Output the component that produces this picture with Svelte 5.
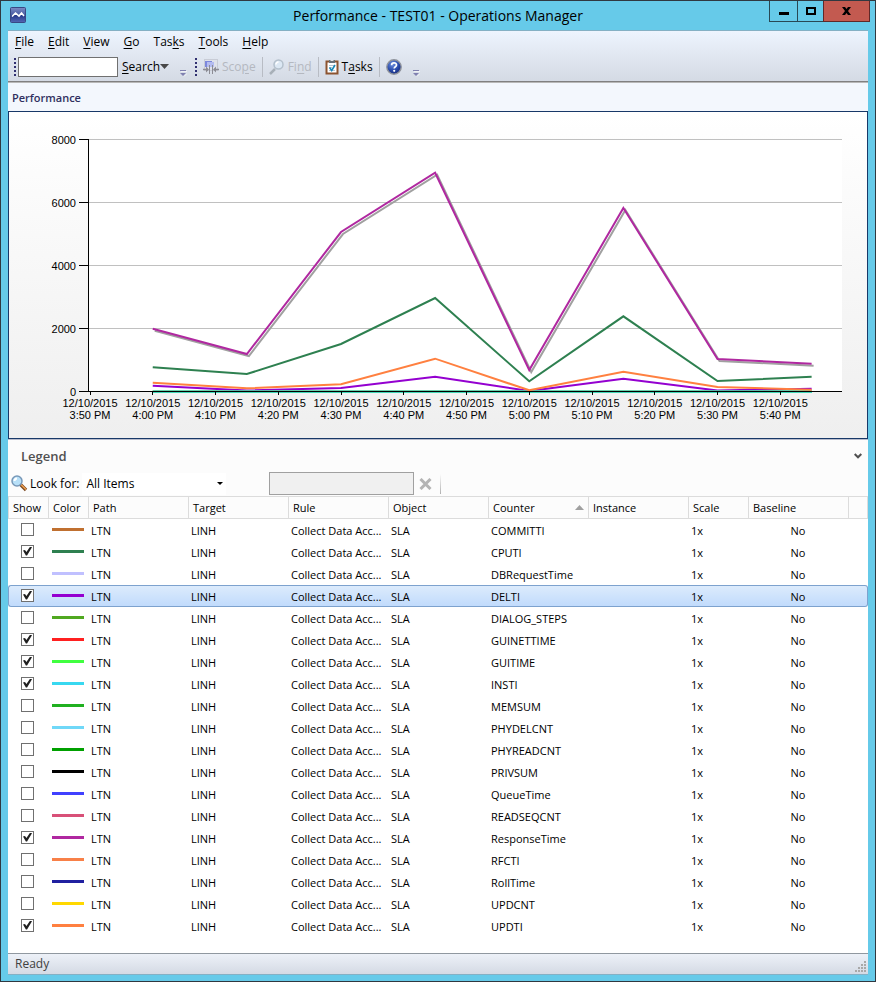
<script>
    // State
    let lookFor = $state("All Items");
    let filter = $state("");
    let search = $state("");
    let selected = $state("DELTI");
    let legendOpen = $state(true);

    const flat = [0, 0, 0, 0, 0, 0, 0, 0];

    let counters = $state([
        { name: "COMMITTI", color: "#c07030", show: false },
        {
            name: "CPUTI",
            color: "#2e8050",
            show: true,
            points: [768, 555, 1508, 2968, 323, 2387, 333, 470],
        },
        { name: "DBRequestTime", color: "#c0c0ff", show: false },
        {
            name: "DELTI",
            color: "#9400d0",
            show: true,
            points: [185, 30, 111, 470, 20, 407, 30, 90],
        },
        { name: "DIALOG_STEPS", color: "#50a820", show: false },
        { name: "GUINETTIME", color: "#ff2020", show: true, points: flat },
        { name: "GUITIME", color: "#40ff40", show: true, points: flat },
        { name: "INSTI", color: "#38d8f0", show: true, points: flat },
        { name: "MEMSUM", color: "#20b020", show: false },
        { name: "PHYDELCNT", color: "#70d8f8", show: false },
        { name: "PHYREADCNT", color: "#00a000", show: false },
        { name: "PRIVSUM", color: "#000000", show: false },
        { name: "QueueTime", color: "#4040ff", show: false },
        { name: "READSEQCNT", color: "#d85078", show: false },
        {
            name: "ResponseTime",
            color: "#b028a0",
            show: true,
            shadow: true,
            points: [1994, 1190, 5063, 6945, 682, 5825, 1032, 883],
        },
        { name: "RFCTI", color: "#f88048", show: false },
        { name: "RollTime", color: "#2020a0", show: false },
        { name: "UPDCNT", color: "#ffd800", show: false },
        {
            name: "UPDTI",
            color: "#ff8040",
            show: true,
            points: [280, 100, 228, 1042, 38, 629, 143, 57],
        },
    ]);

    const menus = [
        ["", "F", "ile"],
        ["", "E", "dit"],
        ["", "V", "iew"],
        ["", "G", "o"],
        ["Tas", "k", "s"],
        ["", "T", "ools"],
        ["", "H", "elp"],
    ];

    const times = [
        "3:50", "4:00", "4:10", "4:20", "4:30", "4:40",
        "4:50", "5:00", "5:10", "5:20", "5:30", "5:40",
    ];
    const levels = [0, 2000, 4000, 6000, 8000];

    // Chart scales, one sample every 15 minutes starting at 4:00
    const timeX = (minutes) => 81 + minutes * 6.275;
    const valueY = (value) => 279.5 - (value * 63) / 2000;
    const line = (points) =>
        points.map((p, i) => `${timeX(10 + i * 15)},${valueY(p)}`).join(" ");

    let series = $derived(counters.filter((c) => c.show && c.points));
</script>

{#snippet overflow()}
    <button class="overflow" aria-label="Toolbar options">
        <svg width="7" height="7" viewBox="0 0 7 7">
            <path d="M1 1.500h6M4 6.500l3-3" stroke="#fff" stroke-width=".6" />
            <path d="M0 .5h6" stroke="#8080b0" />
            <path d="M0 3h6L3 6z" fill="#8080b0" />
        </svg>
    </button>
{/snippet}

<main class="window">
    <header class="titlebar">
        <svg class="app-icon" width="16" height="16" viewBox="0 0 16 16">
            <defs>
                <linearGradient id="icon-fill" x1="0" y1="0" x2="0" y2="1">
                    <stop offset="0" stop-color="#7c8cc4" />
                    <stop offset=".48" stop-color="#4a5ca4" />
                    <stop offset=".52" stop-color="#243688" />
                    <stop offset="1" stop-color="#5468b4" />
                </linearGradient>
            </defs>
            <rect x=".5" y=".5" width="15" height="15" rx="1" fill="url(#icon-fill)" stroke="#384884" />
            <path d="M2 9.500L5.500 6l3.500 3 2.500-3L14 9" fill="none" stroke="#fff" stroke-width="1.600" />
        </svg>
        <h1>Performance - TEST01 - Operations Manager</h1>
        <div class="window-buttons">
            <button class="minimize" aria-label="Minimize">
                <svg width="10" height="8" viewBox="0 0 10 8"><path d="M0 5h10v3H0z" /></svg>
            </button>
            <button class="maximize" aria-label="Maximize">
                <svg width="10" height="8" viewBox="0 0 10 8">
                    <path d="M0 0h10v8H0zM2 2v4h6V2z" fill-rule="evenodd" />
                </svg>
            </button>
            <button class="exit" aria-label="Close">
                <svg width="9" height="8" viewBox="0 0 9 8">
                    <path d="M0 0h3l1.500 2L6 0h3L6 4l3 4H6L4.500 6 3 8H0l3-4z" />
                </svg>
            </button>
        </div>
    </header>

    <div class="client">
        <div class="bars">
            <nav class="menu">
                {#each menus as [before, key, after]}
                    <button>{before}<u>{key}</u>{after}</button>
                {/each}
            </nav>
            <div class="toolbar">
                <span class="grip"></span>
                <input class="search" type="text" aria-label="Search" bind:value={search} />
                <button class="search-button">
                    <span><u>S</u>earch</span>
                    <svg width="9" height="5" viewBox="0 0 9 5"><path d="M0 0h9L4.500 5z" fill="#484848" /></svg>
                </button>
                {@render overflow()}
                <span class="grip second"></span>
                <button class="tool" disabled>
                    <svg width="16" height="16" viewBox="0 0 16 16">
                        <rect x="1.500" y=".5" width="13" height="11" fill="#dfe2ea" stroke="#c8ccd6" />
                        <path d="M2 2h7v6H2z" fill="#7c88dc" />
                        <path d="M4 3h7v5H4z" fill="#b4bcf0" />
                        <path d="M6.500 6v9M9.500 6v9" stroke="#8c8c94" />
                        <path d="M0 10.500h5M16 10.500h-5" stroke="#8c8c94" stroke-width="1.400" />
                        <path d="M3 7.500l3 3-3 3zM13 7.500l-3 3 3 3z" fill="#8c8c94" />
                    </svg>
                    <span>Sco<u>p</u>e</span>
                </button>
                <span class="divider"></span>
                <button class="tool" disabled>
                    <svg width="16" height="16" viewBox="0 0 16 16">
                        <path d="M6 10l-5 5" stroke="#a8b0b8" stroke-width="2.500" />
                        <circle cx="9.500" cy="5.500" r="4.500" fill="#dce8f4" stroke="#b4c0cc" stroke-width="1.500" />
                        <path d="M7 5.500A2.500 2.500 0 0 1 9.500 3" fill="none" stroke="#fff" stroke-width="1.500" />
                    </svg>
                    <span>Fi<u>n</u>d</span>
                </button>
                <span class="divider"></span>
                <button class="tool tasks">
                    <svg width="14" height="16" viewBox="0 0 14 16">
                        <rect x="1.500" y="2.500" width="11" height="12" fill="#fff" stroke="#8c5430" stroke-width="2" />
                        <path d="M4 1h6v3H4z" fill="#687078" />
                        <path d="M5.500 1.500h3" stroke="#e0e4e8" />
                        <path d="M4 6.500h5M4 8.500h3M4 11.500h6" stroke="#b8c4d0" />
                        <path d="M4.500 8.500l2.200 3L10 6" fill="none" stroke="#1888b8" stroke-width="1.600" />
                    </svg>
                    <span>T<u>a</u>sks</span>
                </button>
                <span class="divider"></span>
                <button class="help" aria-label="Help">
                    <svg width="16" height="16" viewBox="0 0 16 16">
                        <defs>
                            <radialGradient id="ball" cx=".4" cy=".3" r=".8">
                                <stop offset="0" stop-color="#6c90e0" />
                                <stop offset=".6" stop-color="#2444a4" />
                                <stop offset="1" stop-color="#18286c" />
                            </radialGradient>
                        </defs>
                        <circle cx="8" cy="8" r="7.200" fill="url(#ball)" stroke="#90949c" stroke-width="1.400" />
                        <path
                            d="M5.600 6.200C5.600 3.200 10.500 3.200 10.500 6c0 1.800-2.300 1.700-2.300 3.600"
                            fill="none"
                            stroke="#fff"
                            stroke-width="1.700"
                        />
                        <circle cx="8.200" cy="11.800" r="1.100" fill="#fff" />
                    </svg>
                </button>
                {@render overflow()}
            </div>
        </div>

        <h2 class="view-title">Performance</h2>

        <section class="chart">
            <svg viewBox="0 0 858 326">
                <rect x="80" y="27" width="753" height="252" fill="#fff" />
                {#each levels as level}
                    <path d="M80 {valueY(level)}H833" stroke="#c0c0c0" />
                    <text x="67" y={valueY(level) + 4} text-anchor="end">{level}</text>
                {/each}

                {#each series as counter}
                    {#if counter.shadow}
                        <polyline
                            points={line(counter.points)}
                            transform="translate(2 2)"
                            stroke="#a0a0a0"
                            stroke-width="2"
                            fill="none"
                        />
                    {/if}
                    <polyline
                        points={line(counter.points)}
                        stroke={counter.color}
                        stroke-width="2"
                        fill="none"
                    />
                {/each}
                {#if series.some((counter) => counter.name === "INSTI")}
                    <path d="M144 280.500H803" stroke="#40d8b8" />
                {/if}

                <!-- Axes -->
                <path d="M79.500 27V280M70 279.500H833" stroke="#000" />
                {#each levels as level}
                    <path d="M70 {valueY(level)}h10" stroke="#000" />
                {/each}
                {#each times as time, i}
                    <path d="M{Math.floor(timeX(i * 10)) + 0.5} 280v3" stroke="#000" />
                    <text x={timeX(i * 10)} y="295" text-anchor="middle">12/10/2015</text>
                    <text x={timeX(i * 10)} y="307" text-anchor="middle">{time} PM</text>
                {/each}
            </svg>
        </section>

        <section class="legend">
            <div class="legend-header">
                <h2>Legend</h2>
                <button
                    aria-label="Toggle legend"
                    aria-expanded={legendOpen}
                    onclick={() => (legendOpen = !legendOpen)}
                >
                    <svg width="8" height="6" viewBox="0 0 8 6">
                        <path d="M.7 1l3.300 3.300L7.300 1" fill="none" stroke="#505050" stroke-width="2" />
                    </svg>
                </button>
            </div>

            {#if legendOpen}
                <div class="look-for">
                    <svg width="17" height="17" viewBox="0 0 17 17">
                        <path d="M9 9l6 6" stroke="#7a4820" stroke-width="3.400" />
                        <path d="M10 9.500l5 5" stroke="#f0a050" stroke-width="1.500" />
                        <circle cx="6" cy="6" r="5" fill="#b8e0f8" stroke="#7898b8" stroke-width="1.500" />
                        <path d="M3.500 6A2.500 2.500 0 0 1 6 3.500" fill="none" stroke="#fff" stroke-width="2" />
                    </svg>
                    <label for="look-for">Look for:</label>
                    <div class="select">
                        <select id="look-for" bind:value={lookFor}>
                            <option>All Items</option>
                            <option>Items in the Chart</option>
                            <option>Items not in the Chart</option>
                        </select>
                        <svg width="6" height="3" viewBox="0 0 6 3"><path d="M0 0h6L3 3z" /></svg>
                    </div>
                    <input type="text" aria-label="Filter" disabled bind:value={filter} />
                    <button class="clear" aria-label="Clear filter" disabled>
                        <svg width="13" height="12" viewBox="0 0 13 12">
                            <path d="M1.500 1l10 10M11.500 1l-10 10" stroke="#b4b4b4" stroke-width="3" />
                        </svg>
                    </button>
                    <span class="edge"></span>
                </div>

                <table>
                    <colgroup>
                        <col class="narrow" />
                        <col class="narrow" />
                        <col class="wide" />
                        <col class="wide" />
                        <col class="wide" />
                        <col class="wide" />
                        <col class="wide" />
                        <col class="wide" />
                        <col class="scale" />
                        <col class="wide" />
                        <col />
                    </colgroup>
                    <thead>
                        <tr>
                            <th>Show</th>
                            <th>Color</th>
                            <th>Path</th>
                            <th>Target</th>
                            <th>Rule</th>
                            <th>Object</th>
                            <th aria-sort="ascending">
                                <div class="sorted">
                                    Counter
                                    <svg width="9" height="5" viewBox="0 0 9 5">
                                        <path d="M0 5h9L4.500 0z" fill="#a0a0a0" />
                                    </svg>
                                </div>
                            </th>
                            <th>Instance</th>
                            <th>Scale</th>
                            <th>Baseline</th>
                            <th></th>
                        </tr>
                    </thead>
                    <tbody>
                        {#each counters as counter}
                            <tr
                                class:selected={selected === counter.name}
                                onclick={() => (selected = counter.name)}
                            >
                                <td class="show">
                                    <input
                                        type="checkbox"
                                        aria-label="Show {counter.name}"
                                        bind:checked={counter.show}
                                    />
                                </td>
                                <td class="color">
                                    <div style="background-color: {counter.color}"></div>
                                </td>
                                <td>LTN</td>
                                <td>LINH</td>
                                <td>Collect Data Acc...</td>
                                <td>SLA</td>
                                <td>{counter.name}</td>
                                <td></td>
                                <td>1x</td>
                                <td class="baseline">No</td>
                                <td></td>
                            </tr>
                        {/each}
                    </tbody>
                </table>
            {/if}
        </section>

        <footer class="status">
            <span>Ready</span>
            <svg width="12" height="12" viewBox="0 0 12 12" fill="#a8a8a8">
                <path d="M9 0h2v2H9zM6 3h2v2H6zM9 3h2v2H9zM3 6h2v2H3zM6 6h2v2H6zM9 6h2v2H9zM0 9h2v2H0zM3 9h2v2H3zM6 9h2v2H6zM9 9h2v2H9z" />
            </svg>
        </footer>
    </div>
</main>

<style>
    :global(body) {
        margin: 0;
    }

    .window {
        box-sizing: border-box;
        min-height: 100vh;
        display: flex;
        flex-direction: column;
        padding: 0 7px 6px;
        border: 1px solid #303840;
        background-color: #66cae9;
        color: #000;
        font-family: "Open Sans", "Noto Sans", sans-serif;
        font-size: 12px;
        line-height: 16px;
    }

    button,
    input,
    select {
        box-sizing: border-box;
        margin: 0;
        padding: 0;
        border: none;
        border-radius: 0;
        background: none;
        color: inherit;
        font: inherit;
    }
    svg {
        display: block;
        flex: none;
    }
    h1,
    h2 {
        margin: 0;
    }
    u {
        text-underline-offset: 2px;
    }

    /* Title bar */
    .titlebar {
        display: grid;
        grid-template-columns: 110px 1fr 110px;
        height: 29px;
    }
    .app-icon {
        margin: 6px 0 0 2px;
    }
    h1 {
        font-size: 14px;
        font-weight: 400;
        line-height: 29px;
        text-align: center;
        white-space: nowrap;
    }
    .window-buttons {
        display: flex;
        justify-content: flex-end;
        height: 21px;
        margin-right: -2px;
    }
    .window-buttons button {
        display: flex;
        align-items: center;
        justify-content: center;
        border: 1px solid #284854;
        border-top: none;
    }
    .minimize {
        width: 29px;
    }
    .window-buttons .maximize {
        width: 25px;
        border-width: 0 0 1px;
    }
    .window-buttons .exit {
        width: 47px;
        border-color: #602828;
        background-color: #c35a50;
    }

    .client {
        flex: 1;
        display: flex;
        flex-direction: column;
        border-top: 1px solid #84b0c4;
        border-bottom: 1px solid #84b0c4;
        background-color: #fff;
    }

    /* Menu and toolbar */
    .bars {
        z-index: 1;
        border-bottom: 1px solid #808080;
        background: linear-gradient(#edf4fe, #d4dae4);
        box-shadow: 0 1px #b8b8b8;
    }
    .menu {
        display: flex;
        gap: 14px;
        height: 22px;
        padding-left: 7px;
    }
    .toolbar {
        display: flex;
        align-items: center;
        height: 28px;
        padding-left: 6px;
    }
    .grip {
        width: 2px;
        height: 18px;
        margin-right: 2px;
        background: repeating-linear-gradient(#303070 0 2px, transparent 2px 4px);
    }
    .second {
        margin: 0 6px 0 8px;
    }
    .search {
        width: 100px;
        height: 20px;
        padding: 0 4px;
        border: 1px solid #707070;
        background-color: #fff;
    }
    .search-button {
        display: flex;
        padding-left: 4px;
    }
    .search-button svg {
        margin-top: 5px;
    }
    .overflow {
        padding: 12px 0 0 11px;
    }
    .divider {
        width: 1px;
        height: 20px;
        margin: 0 6px;
        background-color: #b8bcc4;
    }
    .tool {
        display: flex;
        align-items: center;
        gap: 3px;
    }
    .tool:disabled {
        color: #b4b8c0;
    }

    .view-title {
        padding: 7px 4px 5px;
        background-color: #f3f7fd;
        color: #303060;
        font-size: 11px;
        font-weight: 600;
        line-height: 17px;
    }

    /* Chart */
    .chart {
        border: 1px solid #183868;
        background: linear-gradient(#fff, #efefef);
    }
    .chart svg {
        width: 100%;
    }
    .chart text {
        fill: #000;
        font-family: "Liberation Sans", Arial, sans-serif;
        font-size: 11px;
    }

    /* Legend */
    .legend {
        flex: 1;
        border-top: 1px solid #b8bccc;
        background-color: #fff;
    }
    .legend-header {
        display: flex;
        align-items: center;
        justify-content: space-between;
        height: 31px;
        padding: 0 6px 0 13px;
        background-color: #fcfcfc;
    }
    .legend-header h2 {
        color: #505050;
        font-size: 13px;
        font-weight: 600;
    }
    .look-for {
        display: flex;
        align-items: center;
        height: 25px;
        padding-left: 3px;
        background-color: #fcfcfc;
    }
    .look-for label {
        margin: 0 3px 0 2px;
    }
    .select {
        display: flex;
        align-items: center;
        width: 144px;
        height: 22px;
        background-color: #fff;
    }
    .select svg {
        margin-left: -9px;
        pointer-events: none;
    }
    select {
        width: 100%;
        height: 22px;
        padding-left: 4px;
        appearance: none;
    }
    .look-for input {
        width: 145px;
        height: 23px;
        margin-left: 43px;
        border: 1px solid #a0a0a0;
        background-color: #f0f0f0;
    }
    .clear {
        margin: 0 8px 0 5px;
    }
    .edge {
        width: 1px;
        height: 20px;
        background: linear-gradient(#fcfcfc, #b0b0b0);
    }

    /* Table */
    table {
        width: 100%;
        table-layout: fixed;
        border-collapse: separate;
        border-spacing: 0;
        font-size: 11px;
    }
    .narrow {
        width: 40px;
    }
    .wide {
        width: 100px;
    }
    .scale {
        width: 60px;
    }
    th {
        box-sizing: border-box;
        height: 23px;
        padding: 0 0 0 4px;
        border: 1px solid #dcdcdc;
        border-right: none;
        background-color: #fcfcfc;
        font-weight: 400;
        text-align: left;
    }
    th:last-child {
        border-right: 1px solid #dcdcdc;
    }
    .sorted {
        display: flex;
        align-items: center;
        justify-content: space-between;
        padding-right: 4px;
    }
    td {
        box-sizing: border-box;
        height: 22px;
        padding: 2px 0 0 3px;
        border: 0 solid transparent;
        border-width: 1px 0;
        white-space: nowrap;
    }
    .show {
        padding: 0 0 2px 13px;
    }
    .color {
        padding: 0 4px;
    }
    .color div {
        height: 3px;
        margin-bottom: 2px;
    }
    .baseline {
        padding-left: 0;
        text-align: center;
    }
    input[type="checkbox"] {
        display: block;
        width: 13px;
        height: 13px;
        border: 1px solid #707070;
        background-color: #fff;
        appearance: none;
    }
    input[type="checkbox"]:checked::before {
        content: "";
        display: block;
        width: 9px;
        height: 9px;
        margin: 1px;
        background-color: #202020;
        clip-path: polygon(0 45%, 22% 40%, 38% 62%, 80% 0, 100% 8%, 45% 100%, 32% 100%);
    }
    .selected td {
        border-color: #7da2ce;
        background: linear-gradient(#dcebfc, #c1dbfc);
    }
    .selected td:first-child {
        padding-left: 12px;
        border-left-width: 1px;
        border-radius: 3px 0 0 3px;
    }
    .selected td:last-child {
        border-right-width: 1px;
        border-radius: 0 3px 3px 0;
    }

    .status {
        display: flex;
        align-items: center;
        justify-content: space-between;
        height: 20px;
        padding: 0 1px 0 7px;
        border-top: 1px solid #9098a0;
        background: linear-gradient(#edf1f8, #d4dae4);
        color: #404040;
    }
    .status svg {
        margin-top: 6px;
    }
</style>
